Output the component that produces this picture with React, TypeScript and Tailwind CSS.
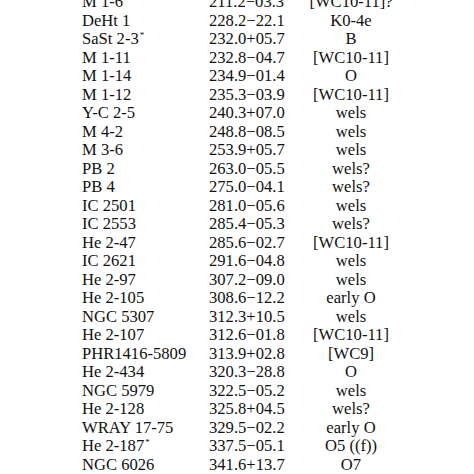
import React from "react";

const rows: [string, string, string, boolean?][] = [
  ["M 1-6", "211.2−03.3", "[WC10-11]?"],
  ["DeHt 1", "228.2−22.1", "K0-4e"],
  ["SaSt 2-3", "232.0+05.7", "B", true],
  ["M 1-11", "232.8−04.7", "[WC10-11]"],
  ["M 1-14", "234.9−01.4", "O"],
  ["M 1-12", "235.3−03.9", "[WC10-11]"],
  ["Y-C 2-5", "240.3+07.0", "wels"],
  ["M 4-2", "248.8−08.5", "wels"],
  ["M 3-6", "253.9+05.7", "wels"],
  ["PB 2", "263.0−05.5", "wels?"],
  ["PB 4", "275.0−04.1", "wels?"],
  ["IC 2501", "281.0−05.6", "wels"],
  ["IC 2553", "285.4−05.3", "wels?"],
  ["He 2-47", "285.6−02.7", "[WC10-11]"],
  ["IC 2621", "291.6−04.8", "wels"],
  ["He 2-97", "307.2−09.0", "wels"],
  ["He 2-105", "308.6−12.2", "early O"],
  ["NGC 5307", "312.3+10.5", "wels"],
  ["He 2-107", "312.6−01.8", "[WC10-11]"],
  ["PHR1416-5809", "313.9+02.8", "[WC9]"],
  ["He 2-434", "320.3−28.8", "O"],
  ["NGC 5979", "322.5−05.2", "wels"],
  ["He 2-128", "325.8+04.5", "wels?"],
  ["WRAY 17-75", "329.5−02.2", "early O"],
  ["He 2-187", "337.5−05.1", "O5 ((f))", true],
  ["NGC 6026", "341.6+13.7", "O7"],
];

export default function App() {
  return (
    <div
      className="w-[474px] h-[474px] overflow-hidden bg-white text-[#111111]"
      style={{ fontFamily: '"Liberation Serif", "Times New Roman", serif' }}
    >
      <div className="mt-[-6.6px] pl-[82px] grid grid-cols-[127px_76px_132px] auto-rows-[18.5px] text-[16.6px] leading-[18.5px]">
        {rows.map(([name, coord, type, star], i) => (
          <React.Fragment key={i}>
            <div className="whitespace-nowrap">
              {name}
              {star && (
                <span className="relative top-[-6px] text-[9px] leading-none ml-[1px]">*</span>
              )}
            </div>
            <div className="whitespace-nowrap">{coord}</div>
            <div className="whitespace-nowrap text-center">{type}</div>
          </React.Fragment>
        ))}
      </div>
    </div>
  );
}
